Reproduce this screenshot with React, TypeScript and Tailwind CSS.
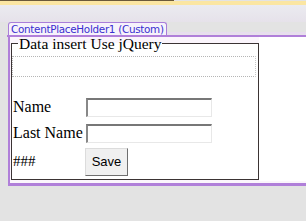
export default function App() {
  return (
    <div className="relative w-[306px] h-[221px] overflow-hidden bg-[#e3e3e3] font-['Liberation_Serif',serif]">
      {/* top chrome */}
      <div className="h-px w-[174px] bg-[#6b5a3a]" />
      <div className="h-[4px] bg-[#fbe6a2]" />
      <div className="h-[17px] bg-gradient-to-b from-[#ebebf0] to-[#e6e2ea]" />

      {/* designer region */}
      <div className="ml-[8px] relative">
        <div className="flex items-end h-[13px]">
          <div className="h-[13px] px-[2px] border border-b-0 border-[#a97ed9] rounded-tl-[3px] rounded-tr-[3px] bg-[#f6f2fb] text-[#3a2fd0] text-[10.4px] leading-[12px] font-['DejaVu_Sans',sans-serif] tracking-[-0.3px]">
            ContentPlaceHolder1 (Custom)
          </div>
          <div className="flex-1 h-[3px] bg-gradient-to-b from-[#e8dcf0] to-[#e6e2ea]" />
        </div>
        <div className="h-[2px] bg-[#b07fd9] -ml-px" />
        <div className="border-l-[2px] border-b-[3px] border-[#b07fd9] bg-[#fbf5fc] h-[149px] pl-[1px] pr-0 pb-[2px]">
          <div className="flex h-full">
            <fieldset className="w-[248px] h-full border border-[#3b3434] pl-0 pr-[2px] pb-0 pt-0 bg-white -mt-[1px]">
              <legend className="text-[15.5px] leading-[15px] text-black ml-[6px] px-[1px]">
                Data insert Use jQuery
              </legend>
              <div className="mt-[5px] h-[21px] border border-dotted border-[#b5b5b5] border-r-[#c8c8c8]" />
              <div className="h-[17px]" />
              <div className="flex items-center h-[26px] pl-[1px]">
                <span className="w-[73px] text-[16px] text-black">Name</span>
                <div className="w-[126px] h-[19px] border-t-2 border-l-2 border-t-[#777] border-l-[#888] border-r border-b border-r-[#e8e8e8] border-b-[#e8e8e8] bg-white" />
              </div>
              <div className="flex items-center h-[26px] pl-[1px]">
                <span className="w-[73px] text-[16px] text-black whitespace-nowrap">Last Name</span>
                <div className="w-[126px] h-[19px] border-t-2 border-l-2 border-t-[#777] border-l-[#888] border-r border-b border-r-[#e8e8e8] border-b-[#e8e8e8] bg-white" />
              </div>
              <div className="flex items-center h-[31px] pl-[1px]">
                <span className="w-[72px] text-[15px] text-black">###</span>
                <button className="w-[43px] h-[28px] bg-[#f0f0f0] border border-[#dcdcdc] border-r-[#6e6e6e] border-b-[#6e6e6e] text-[13px] text-black font-['Liberation_Sans',sans-serif]">
                  Save
                </button>
              </div>
            </fieldset>
            <div className="flex-1 bg-white" />
          </div>
        </div>
      </div>
    </div>
  );
}
